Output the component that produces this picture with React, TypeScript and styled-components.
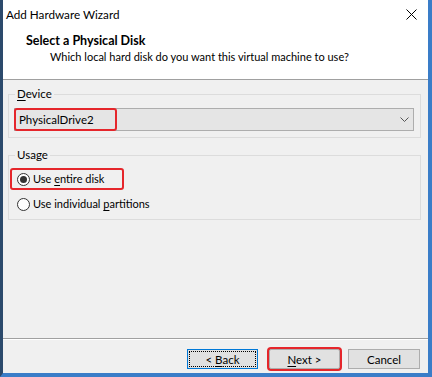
import React from 'react';
import styled, { createGlobalStyle } from 'styled-components';

const GlobalStyle = createGlobalStyle`
  html, body {
    margin: 0;
    padding: 0;
    background: #ffffff;
  }
  body {
    font-family: Lato, "Liberation Sans", sans-serif;
    font-size: 11px;
    line-height: 16px;
    color: #000000;
  }
`;

const Window = styled.div`
  width: 432px;
  height: 377px;
  box-sizing: border-box;
  display: flex;
  flex-direction: column;
  border-left: 3px solid #2c4a6c;
  border-right: 4px solid #3a7dc8;
  border-bottom: 4px solid #3a7dc8;
  background: #f0f0f0;
`;

const TitleBar = styled.div`
  height: 28px;
  flex-shrink: 0;
  display: flex;
  align-items: center;
  justify-content: space-between;
  padding: 0 11px 0 3px;
  background: #ffffff;
  font-size: 11.7px;
`;

const CloseIcon = styled.svg`
  width: 11px;
  height: 11px;
  display: block;
`;

const Header = styled.div`
  height: 52px;
  flex-shrink: 0;
  box-sizing: border-box;
  padding: 5px 0 0 23px;
  background: #ffffff;
  border-bottom: 1px solid #a0a0a0;
`;

const HeaderTitle = styled.div`
  font-weight: 700;
  font-size: 12.5px;
`;

const HeaderSubtitle = styled.div`
  margin-left: 24px;
`;

const Body = styled.div`
  flex: 1;
  padding: 7px 7px 0 5px;
`;

const Group = styled.fieldset<{ $gap: number; $bottom: number }>`
  margin: ${(p) => p.$gap}px 0 0 0;
  padding: 0 0 ${(p) => p.$bottom}px 0;
  border: 1px solid #dcdcdc;
  min-width: 0;
`;

const Legend = styled.legend`
  margin-left: 6px;
  padding: 0 2px;
  line-height: 14px;
  font-size: 11.5px;
`;

const Key = styled.span`
  text-decoration: underline;
  text-underline-offset: 2px;
`;

const ComboBox = styled.div`
  margin: 7px 6px 0 5px;
  height: 23px;
  box-sizing: border-box;
  display: flex;
  align-items: stretch;
  justify-content: space-between;
  background: #e5e5e5;
  border: 1px solid #adadad;
`;

const ComboValue = styled.div<{ $marked?: boolean }>`
  margin: -1px;
  width: 103px;
  box-sizing: border-box;
  display: flex;
  align-items: center;
  padding-left: 3px;
  font-size: 11.5px;
  border: 2px solid ${(p) => (p.$marked ? '#e5262b' : 'transparent')};
  border-radius: 3px;
`;

const Chevron = styled.svg`
  width: 9px;
  height: 6px;
  align-self: center;
  margin-right: 4px;
`;

const RadioRow = styled.label<{ $marked?: boolean; $top: number; $width?: number }>`
  display: flex;
  width: ${(p) => (p.$width ? `${p.$width}px` : 'fit-content')};
  align-items: center;
  gap: 3px;
  height: 22px;
  box-sizing: border-box;
  margin: ${(p) => p.$top}px 0 0 1px;
  padding: 0 0 0 5px;
  border: 2px solid ${(p) => (p.$marked ? '#e5262b' : 'transparent')};
  border-radius: 3px;
`;

const RadioCircle = styled.span<{ $checked?: boolean }>`
  width: 13px;
  height: 13px;
  flex-shrink: 0;
  box-sizing: border-box;
  border-radius: 50%;
  border: 1px solid #333333;
  background: #ffffff;
  display: flex;
  align-items: center;
  justify-content: center;

  &::after {
    content: '';
    width: 7px;
    height: 7px;
    border-radius: 50%;
    background: ${(p) => (p.$checked ? '#333333' : 'transparent')};
  }
`;

const Footer = styled.div`
  height: 35px;
  flex-shrink: 0;
  box-sizing: border-box;
  display: flex;
  justify-content: flex-end;
  align-items: flex-start;
  padding: 10px 8px 0 0;
  border-top: 1px solid #a0a0a0;
  box-shadow: inset 0 1px #ffffff;
`;

const Button = styled.button<{ $width: number; $gap: number; $focused?: boolean; $marked?: boolean }>`
  width: ${(p) => p.$width}px;
  height: 20px;
  margin-left: ${(p) => p.$gap}px;
  padding: 0;
  font-family: inherit;
  font-size: 11.5px;
  color: #000000;
  background: #e1e1e1;
  border: 1px solid ${(p) => (p.$focused ? '#0078d7' : '#adadad')};
  ${(p) => (p.$focused ? 'outline: 1px dotted #000000; outline-offset: -3px;' : '')}
  ${(p) => (p.$marked ? 'box-shadow: 0 0 0 2px #e5262b; border-radius: 2px;' : '')}
`;

export default function App() {
  return (
    <>
      <GlobalStyle />
      <Window>
        <TitleBar>
          <span>Add Hardware Wizard</span>
          <CloseIcon viewBox="0 0 11 11">
            <path d="M0.5 0.5 L10.5 10.5 M10.5 0.5 L0.5 10.5" stroke="#000" strokeWidth="1" />
          </CloseIcon>
        </TitleBar>
        <Header>
          <HeaderTitle>Select a Physical Disk</HeaderTitle>
          <HeaderSubtitle>Which local hard disk do you want this virtual machine to use?</HeaderSubtitle>
        </Header>
        <Body>
          <Group $gap={0} $bottom={6}>
            <Legend>
              <Key>D</Key>evice
            </Legend>
            <ComboBox>
              <ComboValue $marked>PhysicalDrive2</ComboValue>
              <Chevron viewBox="0 0 9 6">
                <path d="M0.5 0.5 L4.5 4.5 L8.5 0.5" fill="none" stroke="#555" strokeWidth="1" />
              </Chevron>
            </ComboBox>
          </Group>
          <Group $gap={10} $bottom={4}>
            <Legend>Usage</Legend>
            <RadioRow $marked $top={6} $width={114}>
              <RadioCircle $checked />
              <span>
                Use <Key>e</Key>ntire disk
              </span>
            </RadioRow>
            <RadioRow $top={3}>
              <RadioCircle />
              <span>
                Use individual <Key>p</Key>artitions
              </span>
            </RadioRow>
          </Group>
        </Body>
        <Footer>
          <Button $width={71} $gap={0} $focused>
            &lt; <Key>B</Key>ack
          </Button>
          <Button $width={71} $gap={11} $marked>
            <Key>N</Key>ext &gt;
          </Button>
          <Button $width={72} $gap={8}>
            Cancel
          </Button>
        </Footer>
      </Window>
    </>
  );
}
